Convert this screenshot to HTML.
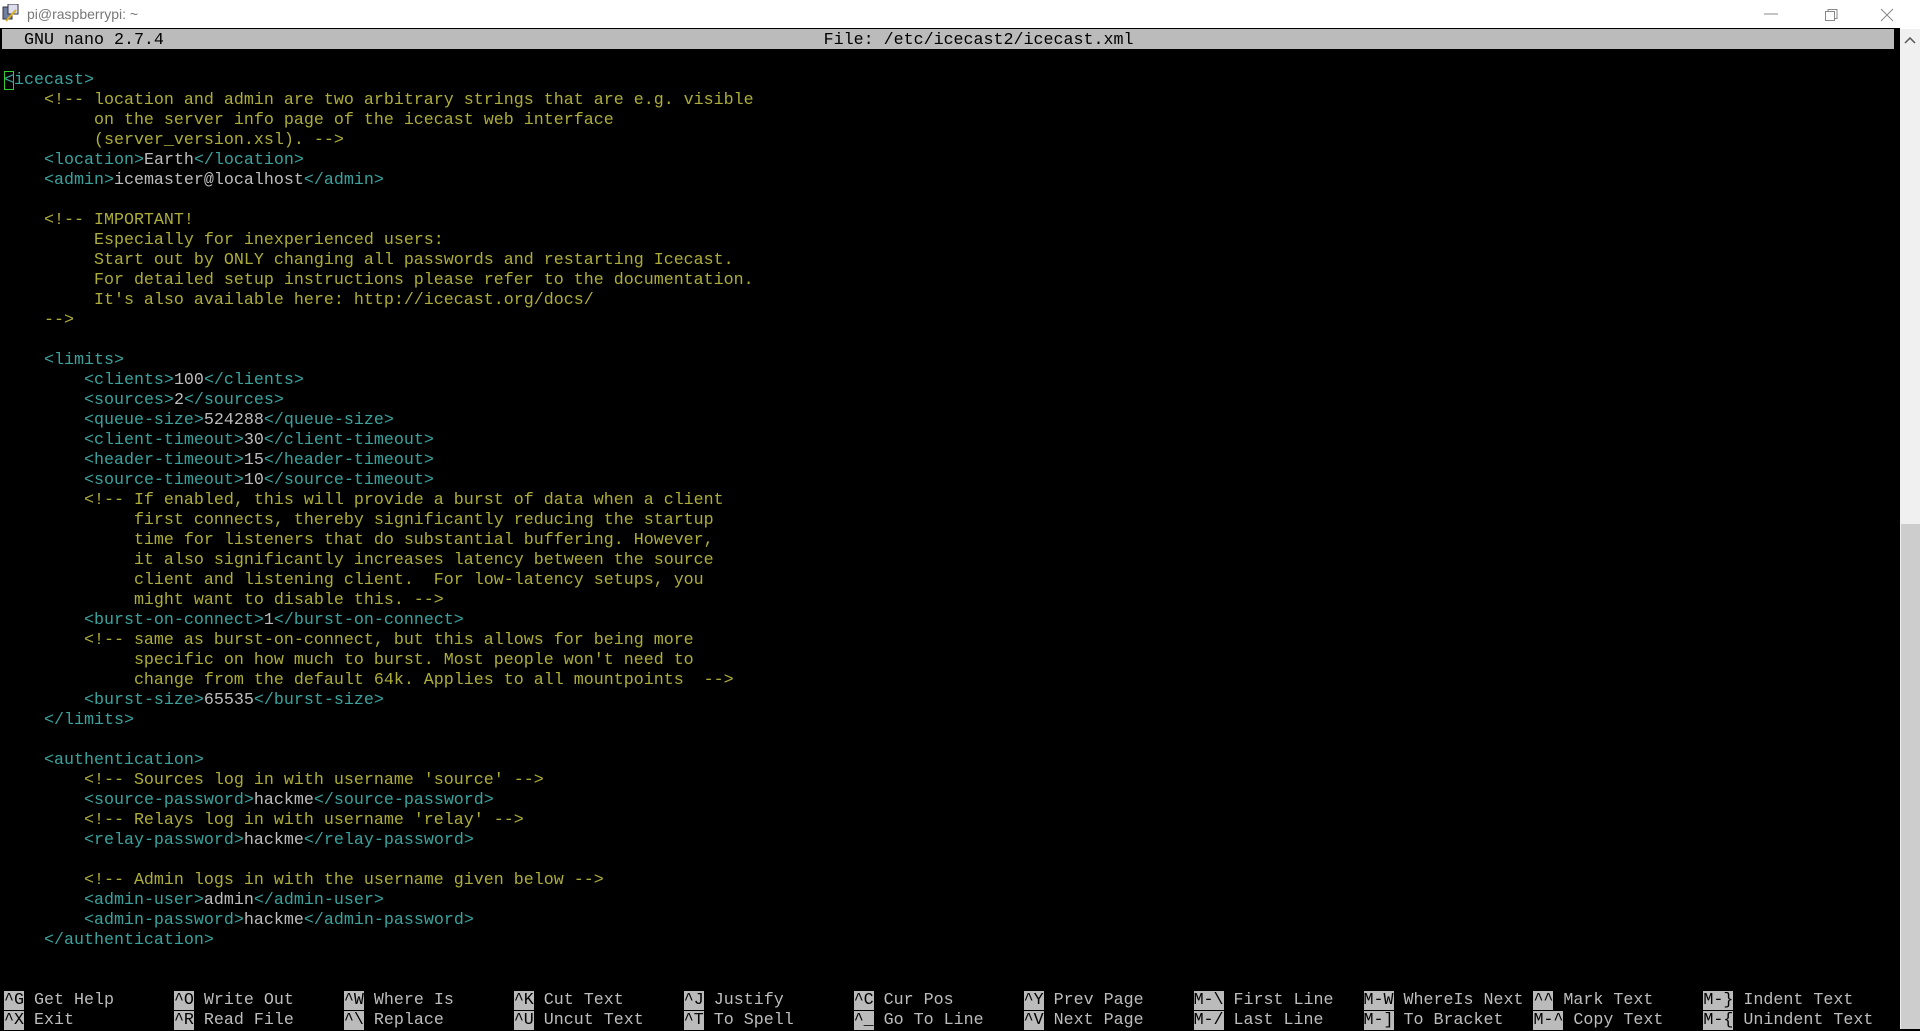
<!DOCTYPE html>
<html><head><meta charset="utf-8"><style>
*{margin:0;padding:0;box-sizing:border-box}
body{width:1920px;height:1029px;background:#000;overflow:hidden;position:relative;font-family:"Liberation Mono",monospace}
#tb{position:absolute;left:0;top:0;width:1920px;height:29px;background:#fff}
#tb .t{position:absolute;left:27px;top:6px;font:14px "Liberation Sans",sans-serif;color:#777}
#term{position:absolute;left:0;top:28px;width:1900px;height:1001px;background:#000}
#txt{position:absolute;left:0;top:3px;width:1900px;height:990px}
.r{position:absolute;left:4px;height:20px;line-height:20px;font-size:16.67px;white-space:pre;color:#bdbdbd}
.g{color:#3aa39e}.c{color:#adad3a}.k{background:#bbb;color:#000}
#hdr{position:absolute;left:2px;top:1px;width:1892px;height:20px;background:#bbb}
#sb{position:absolute;left:1900px;top:29px;width:20px;height:1000px;background:#f0f0f0}
#th{position:absolute;left:1901px;top:524px;width:19px;height:505px;background:#cdcdcd}
</style></head><body>
<div id="tb">
<svg style="position:absolute;left:2px;top:4px" width="18" height="20"><rect x="1" y="3" width="9" height="12" fill="#7080a0" stroke="#334" /><rect x="6" y="0" width="10" height="10" fill="#dde" stroke="#334"/><path d="M4 17 L14 6" stroke="#d8b020" stroke-width="2"/></svg>
<span class="t">pi@raspberrypi: ~</span>
<svg style="position:absolute;left:1762px;top:8px" width="140" height="16"><path d="M2 6 H16" stroke="#888"/><rect x="63.5" y="3.5" width="9" height="9" fill="none" stroke="#888"/><path d="M66 3.5V1.5H75V10.5H73" fill="none" stroke="#888"/><path d="M119 1 L131 13 M131 1 L119 13" stroke="#888"/></svg>
</div>
<div id="term">
<div id="hdr"></div>
<div id="txt">
<div class="r" style="top:0;color:#000">  GNU nano 2.7.4                                                                  File: /etc/icecast2/icecast.xml</div>
<div class="r" style="top:40px"><span class="g"><span style="outline:1px solid #3c3;outline-offset:-1px">&lt;</span>icecast&gt;</span></div>
<div class="r c" style="top:60px">    &lt;!-- location and admin are two arbitrary strings that are e.g. visible</div>
<div class="r c" style="top:80px">         on the server info page of the icecast web interface</div>
<div class="r c" style="top:100px">         (server_version.xsl). --&gt;</div>
<div class="r" style="top:120px">    <span class="g">&lt;location&gt;</span>Earth<span class="g">&lt;/location&gt;</span></div>
<div class="r" style="top:140px">    <span class="g">&lt;admin&gt;</span>icemaster@localhost<span class="g">&lt;/admin&gt;</span></div>
<div class="r c" style="top:180px">    &lt;!-- IMPORTANT!</div>
<div class="r c" style="top:200px">         Especially for inexperienced users:</div>
<div class="r c" style="top:220px">         Start out by ONLY changing all passwords and restarting Icecast.</div>
<div class="r c" style="top:240px">         For detailed setup instructions please refer to the documentation.</div>
<div class="r c" style="top:260px">         It's also available here: http://icecast.org/docs/</div>
<div class="r c" style="top:280px">    --&gt;</div>
<div class="r g" style="top:320px">    &lt;limits&gt;</div>
<div class="r" style="top:340px">        <span class="g">&lt;clients&gt;</span>100<span class="g">&lt;/clients&gt;</span></div>
<div class="r" style="top:360px">        <span class="g">&lt;sources&gt;</span>2<span class="g">&lt;/sources&gt;</span></div>
<div class="r" style="top:380px">        <span class="g">&lt;queue-size&gt;</span>524288<span class="g">&lt;/queue-size&gt;</span></div>
<div class="r" style="top:400px">        <span class="g">&lt;client-timeout&gt;</span>30<span class="g">&lt;/client-timeout&gt;</span></div>
<div class="r" style="top:420px">        <span class="g">&lt;header-timeout&gt;</span>15<span class="g">&lt;/header-timeout&gt;</span></div>
<div class="r" style="top:440px">        <span class="g">&lt;source-timeout&gt;</span>10<span class="g">&lt;/source-timeout&gt;</span></div>
<div class="r c" style="top:460px">        &lt;!-- If enabled, this will provide a burst of data when a client</div>
<div class="r c" style="top:480px">             first connects, thereby significantly reducing the startup</div>
<div class="r c" style="top:500px">             time for listeners that do substantial buffering. However,</div>
<div class="r c" style="top:520px">             it also significantly increases latency between the source</div>
<div class="r c" style="top:540px">             client and listening client.  For low-latency setups, you</div>
<div class="r c" style="top:560px">             might want to disable this. --&gt;</div>
<div class="r" style="top:580px">        <span class="g">&lt;burst-on-connect&gt;</span>1<span class="g">&lt;/burst-on-connect&gt;</span></div>
<div class="r c" style="top:600px">        &lt;!-- same as burst-on-connect, but this allows for being more</div>
<div class="r c" style="top:620px">             specific on how much to burst. Most people won't need to</div>
<div class="r c" style="top:640px">             change from the default 64k. Applies to all mountpoints  --&gt;</div>
<div class="r" style="top:660px">        <span class="g">&lt;burst-size&gt;</span>65535<span class="g">&lt;/burst-size&gt;</span></div>
<div class="r g" style="top:680px">    &lt;/limits&gt;</div>
<div class="r g" style="top:720px">    &lt;authentication&gt;</div>
<div class="r c" style="top:740px">        &lt;!-- Sources log in with username 'source' --&gt;</div>
<div class="r" style="top:760px">        <span class="g">&lt;source-password&gt;</span>hackme<span class="g">&lt;/source-password&gt;</span></div>
<div class="r c" style="top:780px">        &lt;!-- Relays log in with username 'relay' --&gt;</div>
<div class="r" style="top:800px">        <span class="g">&lt;relay-password&gt;</span>hackme<span class="g">&lt;/relay-password&gt;</span></div>
<div class="r c" style="top:840px">        &lt;!-- Admin logs in with the username given below --&gt;</div>
<div class="r" style="top:860px">        <span class="g">&lt;admin-user&gt;</span>admin<span class="g">&lt;/admin-user&gt;</span></div>
<div class="r" style="top:880px">        <span class="g">&lt;admin-password&gt;</span>hackme<span class="g">&lt;/admin-password&gt;</span></div>
<div class="r g" style="top:900px">    &lt;/authentication&gt;</div>
<div class="r" style="top:960px"><span class="k">^G</span> Get Help      <span class="k">^O</span> Write Out     <span class="k">^W</span> Where Is      <span class="k">^K</span> Cut Text      <span class="k">^J</span> Justify       <span class="k">^C</span> Cur Pos       <span class="k">^Y</span> Prev Page     <span class="k">M-\</span> First Line   <span class="k">M-W</span> WhereIs Next <span class="k">^^</span> Mark Text     <span class="k">M-}</span> Indent Text</div>
<div class="r" style="top:980px"><span class="k">^X</span> Exit          <span class="k">^R</span> Read File     <span class="k">^\</span> Replace       <span class="k">^U</span> Uncut Text    <span class="k">^T</span> To Spell      <span class="k">^_</span> Go To Line    <span class="k">^V</span> Next Page     <span class="k">M-/</span> Last Line    <span class="k">M-]</span> To Bracket   <span class="k">M-^</span> Copy Text    <span class="k">M-{</span> Unindent Text</div>
</div>
</div>
<div id="sb"><svg style="position:absolute;left:4px;top:8px" width="12" height="8"><path d="M1 6 L6 1 L11 6" fill="none" stroke="#555" stroke-width="1.5"/></svg></div>
<div id="th"></div>
</body></html>
